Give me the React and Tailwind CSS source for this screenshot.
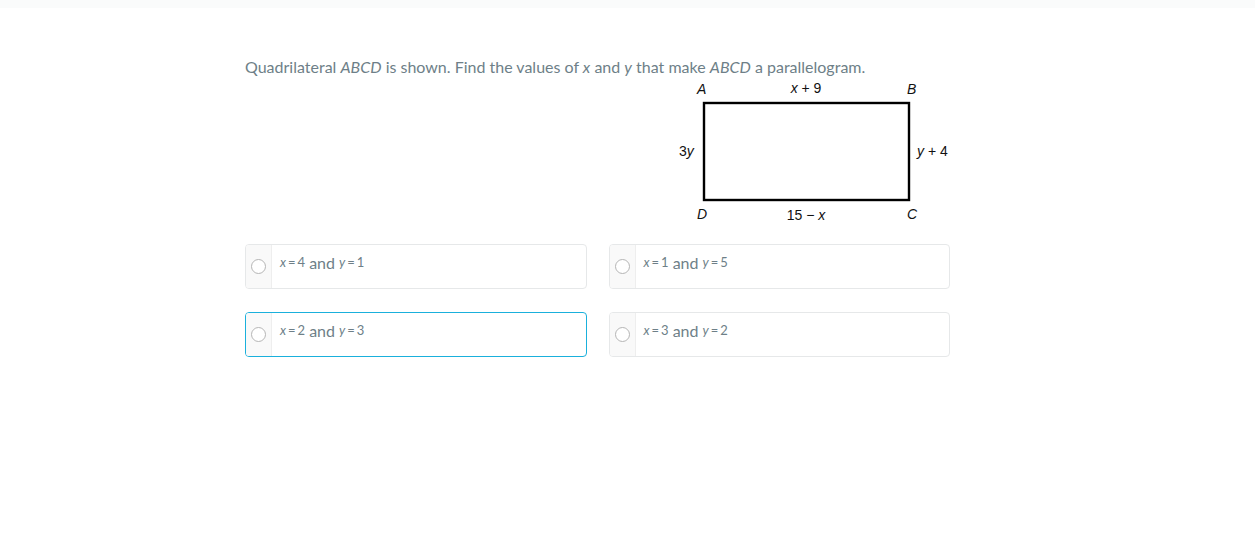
import React from "react";

const options = [
  { x: 4, y: 1 },
  { x: 1, y: 5 },
  { x: 2, y: 3, active: true },
  { x: 3, y: 2 },
];

const Figure = () => (
  <svg width="290" height="150" viewBox="0 0 290 150" className="block">
    <g fontFamily="'Liberation Sans', Arial, sans-serif" fontSize="14" fill="#111">
      <text x="37" y="16" fontStyle="italic">A</text>
      <text x="146" y="15" textAnchor="middle"><tspan fontStyle="italic">x</tspan> + 9</text>
      <text x="247" y="16" fontStyle="italic">B</text>
      <text x="19" y="78">3<tspan fontStyle="italic">y</tspan></text>
      <text x="257" y="78"><tspan fontStyle="italic">y</tspan> + 4</text>
      <text x="37" y="141" fontStyle="italic">D</text>
      <text x="146" y="142" textAnchor="middle">15 − <tspan fontStyle="italic">x</tspan></text>
      <text x="247" y="141" fontStyle="italic">C</text>
    </g>
    <rect x="44" y="25" width="205" height="97" fill="none" stroke="#000" strokeWidth="2.4" />
  </svg>
);

const Option = ({ x, y, active }) => (
  <div
    className={
      "flex h-[45px] overflow-hidden rounded bg-white border " +
      (active ? "border-[#1ab0dc]" : "border-[#e6e8e9]")
    }
  >
    <div className="flex w-[26px] shrink-0 items-center justify-center border-r border-[#eeeeee] bg-[#f9f9f9]">
      <span className="block h-[15px] w-[15px] rounded-full border border-[#b5b5b5] bg-white" />
    </div>
    <div className="flex items-center pl-[8px] pb-[7px] text-[#6e7f88]">
      <span className="text-[13px]">
        <i>x</i>
        <span className="mx-[2px]">=</span>
        {x}
      </span>
      <span className="mx-[4px] text-[16px]">and</span>
      <span className="text-[13px]">
        <i>y</i>
        <span className="mx-[2px]">=</span>
        {y}
      </span>
    </div>
  </div>
);

export default function App() {
  return (
    <div className="min-h-screen bg-white font-['Lato',sans-serif]">
      <div className="h-[8px] bg-[#fafbfb]" />
      <div className="mx-auto w-[705px] pt-[49px] -translate-x-[30px]">
        <p className="text-[16px] leading-[20px] text-[#6e7f88]">
          Quadrilateral <i>ABCD</i> is shown. Find the values of <i>x</i> and <i>y</i> that make <i>ABCD</i> a parallelogram.
        </p>
        <div className="flex justify-end mt-[1px]">
          <Figure />
        </div>
        <div className="mt-[16px] grid grid-cols-2 gap-x-[22px] gap-y-[23px]">
          {options.map((o, i) => (
            <Option key={i} {...o} />
          ))}
        </div>
      </div>
    </div>
  );
}
